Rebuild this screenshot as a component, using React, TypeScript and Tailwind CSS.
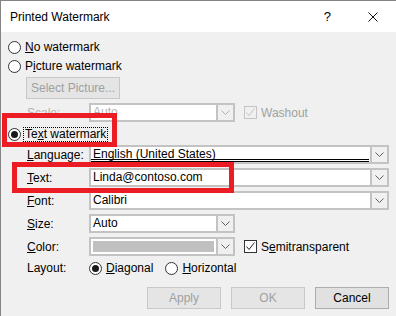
import React from "react";

const FONT = "font-['Liberation_Sans',Arial,sans-serif]";

function Chevron({ disabled }: { disabled?: boolean }) {
  return (
    <svg width="9" height="6" viewBox="0 0 9 6" className="block">
      <polyline
        points="0.5,0.5 4.5,4.5 8.5,0.5"
        fill="none"
        stroke={disabled ? "#b0b0b0" : "#606060"}
        strokeWidth="1"
      />
    </svg>
  );
}

function Radio({ checked }: { checked?: boolean }) {
  return (
    <span className="flex h-[13px] w-[13px] shrink-0 items-center justify-center rounded-full border border-[#333] bg-white">
      {checked && <span className="h-[7px] w-[7px] rounded-full bg-[#1a1a1a]" />}
    </span>
  );
}

function Check({ checked, disabled }: { checked?: boolean; disabled?: boolean }) {
  return (
    <span
      className={
        disabled
          ? "flex h-[13px] w-[13px] shrink-0 items-center justify-center border border-[#c4c4c4] bg-[#f0f0f0]"
          : "flex h-[13px] w-[13px] shrink-0 items-center justify-center border border-[#333] bg-white"
      }
    >
      {checked && (
        <svg width="11" height="11" viewBox="0 0 11 11">
          <polyline
            points="1.5,5.5 4,8.5 9.5,1.5"
            fill="none"
            stroke={disabled ? "#c4c4c4" : "#222"}
            strokeWidth="1"
          />
        </svg>
      )}
    </span>
  );
}

function Combo({
  width,
  value,
  disabled,
  underline,
  swatch,
}: {
  width: string;
  value?: string;
  disabled?: boolean;
  underline?: boolean;
  swatch?: boolean;
}) {
  return (
    <div className={`flex h-[19px] ${width}`}>
      <div className="relative flex flex-1 items-center border-2 border-[#c3c3c3] bg-white pl-[2px]">
        {swatch ? (
          <span className="h-[11px] flex-1 bg-[#c0c0c0] mr-[2px]" />
        ) : (
          <span className={disabled ? "-mt-[1px] text-[#b4b4b4]" : "-mt-[1px] text-black"}>{value}</span>
        )}
        {underline && (
          <span className="absolute bottom-0 left-0 right-[1px] h-[3px] border-y border-black" />
        )}
      </div>
      <div className="flex w-[17px] items-center justify-center border-2 border-l-0 border-[#c3c3c3] bg-[#f0f0f0]">
        <Chevron disabled={disabled} />
      </div>
    </div>
  );
}

function Button({ label, disabled }: { label: string; disabled?: boolean }) {
  return (
    <div
      className={
        disabled
          ? "flex h-[22px] w-[74px] items-center justify-center border border-[#c8c8c8] bg-[#e5e5e5] text-[#a0a0a0]"
          : "flex h-[22px] w-[74px] items-center justify-center border border-[#adadad] bg-[#e1e1e1] text-black"
      }
    >
      {label}
    </div>
  );
}

export default function App() {
  return (
    <div
      className={`relative h-[316px] w-[396px] overflow-hidden border-l border-t border-[#858585] bg-[#f0f0f0] text-[12px] leading-none text-black ${FONT}`}
    >
      <div className="flex h-[31px] items-center bg-white pl-[9px] pr-[18px]">
        <span>Printed Watermark</span>
        <span className="ml-auto mr-[37px] text-[13px]">?</span>
        <svg width="10" height="10" viewBox="0 0 10 10">
          <path d="M0.5 0.5 L9.5 9.5 M9.5 0.5 L0.5 9.5" stroke="#111" strokeWidth="1" />
        </svg>
      </div>

      <div className="flex flex-col">
        <div className="mt-[6px] flex h-[18px] items-center pl-[7px]">
          <Radio />
          <span className="ml-[4px]">
            <span className="underline">N</span>o watermark
          </span>
        </div>
        <div className="mt-[1px] flex h-[18px] items-center pl-[7px]">
          <Radio />
          <span className="ml-[4px]">
            P<span className="underline">i</span>cture watermark
          </span>
        </div>
        <div className="mt-[2px] pl-[25px]">
          <div className="flex h-[22px] w-[94px] items-center justify-center border border-[#c8c8c8] bg-[#e5e5e5] text-[#a0a0a0]">
            Select Picture...
          </div>
        </div>
        <div className="mt-[4px] flex h-[19px] items-center pl-[26px]">
          <span className="w-[62px] text-[#b4b4b4]">Scale:</span>
          <Combo width="w-[146px]" value="Auto" disabled />
          <span className="ml-[9px]">
            <Check checked disabled />
          </span>
          <span className="ml-[4px] text-[#a0a0a0]">Washout</span>
        </div>
        <div className="mt-[2px] flex h-[20px] items-center pl-[7px]">
          <Radio checked />
          <span className="ml-[2px] flex h-[15px] items-center border border-dotted border-black px-[1px]">
            Te<span className="underline">x</span>t watermark
          </span>
        </div>
        <div className="mt-[1px] flex h-[19px] items-center pl-[26px]">
          <span className="w-[62px]">
            <span className="underline">L</span>anguage:
          </span>
          <Combo width="w-[300px]" value="English (United States)" underline />
        </div>
        <div className="mt-[4px] flex h-[19px] items-center pl-[26px]">
          <span className="w-[62px]">
            <span className="underline">T</span>ext:
          </span>
          <Combo width="w-[300px]" value="Linda@contoso.com" />
        </div>
        <div className="mt-[4px] flex h-[19px] items-center pl-[26px]">
          <span className="w-[62px]">
            <span className="underline">F</span>ont:
          </span>
          <Combo width="w-[300px]" value="Calibri" />
        </div>
        <div className="mt-[4px] flex h-[19px] items-center pl-[26px]">
          <span className="w-[62px]">
            <span className="underline">S</span>ize:
          </span>
          <Combo width="w-[146px]" value="Auto" />
        </div>
        <div className="mt-[4px] flex h-[19px] items-center pl-[26px]">
          <span className="w-[62px]">
            <span className="underline">C</span>olor:
          </span>
          <Combo width="w-[146px]" swatch />
          <span className="ml-[9px]">
            <Check checked />
          </span>
          <span className="ml-[4px]">
            S<span className="underline">e</span>mitransparent
          </span>
        </div>
        <div className="mt-[3px] flex h-[18px] items-center pl-[26px]">
          <span className="w-[62px]">Layout:</span>
          <Radio checked />
          <span className="ml-[4px]">
            <span className="underline">D</span>iagonal
          </span>
          <span className="ml-[12px]">
            <Radio />
          </span>
          <span className="ml-[4px]">
            <span className="underline">H</span>orizontal
          </span>
        </div>
        <div className="mt-[10px] flex gap-[10px] pl-[146px]">
          <Button label="Apply" disabled />
          <Button label="OK" disabled />
          <Button label="Cancel" />
        </div>
      </div>

      <div className="absolute left-[1px] top-[112px] h-[34px] w-[115px] border-[5px] border-[#ec1c24]" />
      <div className="absolute left-[11px] top-[161px] h-[31px] w-[222px] border-[5px] border-[#ec1c24]" />
    </div>
  );
}
